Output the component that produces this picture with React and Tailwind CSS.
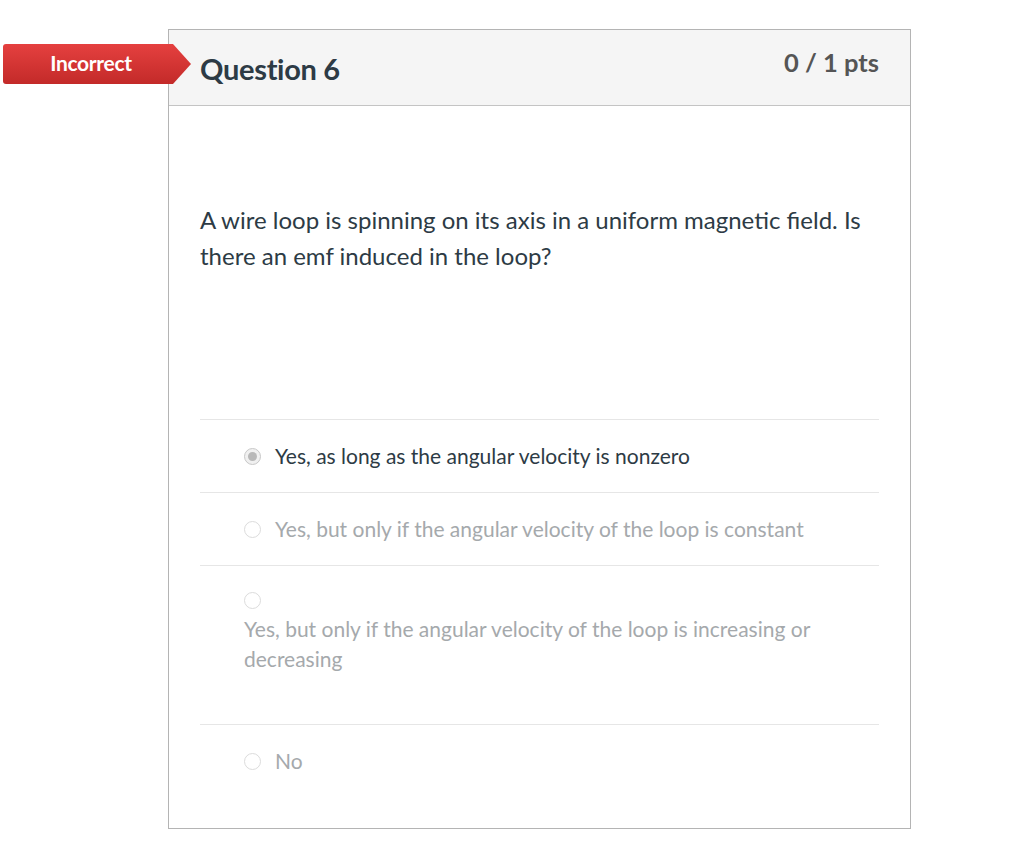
import React from 'react';

const answers = [
  {id: 1, text: 'Yes, as long as the angular velocity is nonzero', selected: true},
  {id: 2, text: 'Yes, but only if the angular velocity of the loop is constant'},
  {id: 3, text: 'Yes, but only if the angular velocity of the loop is increasing or decreasing', stacked: true},
  {id: 4, text: 'No'},
];

const Radio = ({selected}) => (
  <span
    className={`inline-flex items-center justify-center w-[17px] h-[17px] rounded-full border shrink-0 ${selected ? 'border-[#c8c8c8] bg-[#f0f0f0]' : 'border-[#dcdcdc] bg-white'}`}
  >
    {selected && <span className="w-[9px] h-[9px] rounded-full bg-[#b8b8b8]" />}
  </span>
);

const App = () => {
  return (
    <div className="min-h-[853px] bg-white pt-[29px] font-['Lato','Open_Sans',sans-serif]">
      <div className="relative ml-[168px] w-[743px] border border-[#b4b4b4]">
        <div
          className="absolute left-[-166px] top-[14px] h-[40px] w-[188px] rounded-l-[3px] bg-gradient-to-b from-[#e5403f] to-[#c32a29] [clip-path:polygon(0_0,170px_0,188px_50%,170px_100%,0_100%)] flex items-center"
        >
          <span className="w-[176px] pb-[3px] text-center text-white font-bold text-[21px] leading-[26px] tracking-[-0.3px]">Incorrect</span>
        </div>

        <div className="h-[76px] bg-[#f5f5f5] border-b border-[#c4c4c4] flex justify-between px-[31px]">
          <h2 className="pt-[22px] text-[29px] leading-[34px] font-bold text-[#2d3b45] tracking-[-0.3px]">Question 6</h2>
          <div className="pt-[17px] text-[25.5px] leading-[30px] font-bold text-[#555555]">0 / 1 pts</div>
        </div>

        <div className="px-[31px] pt-[96px] pb-[31px]">
          <p className="text-[24px] leading-[36px] text-[#2d3b45] max-w-[670px]">
            A wire loop is spinning on its axis in a uniform magnetic field. Is there an emf induced in the loop?
          </p>

          <div className="mt-[145px]">
            {answers.map((item) => (
              item.stacked ? (
                <div key={item.id} className="border-t border-[#e6e6e6] pl-[44px] pt-[25px] h-[159px]">
                  <Radio />
                  <div className="mt-[-1px] text-[21px] leading-[30px] text-[#a5a9ac] max-w-[600px]">{item.text}</div>
                </div>
              ) : (
                <div key={item.id} className="border-t border-[#e6e6e6] pl-[44px] h-[73px] flex items-center gap-[14px]">
                  <Radio selected={item.selected} />
                  <span className={`text-[21px] leading-[30px] ${item.selected ? 'text-[#2d3b45]' : 'text-[#a5a9ac]'}`}>{item.text}</span>
                </div>
              )
            ))}
          </div>
        </div>
      </div>
    </div>
  );
};

export default App;
